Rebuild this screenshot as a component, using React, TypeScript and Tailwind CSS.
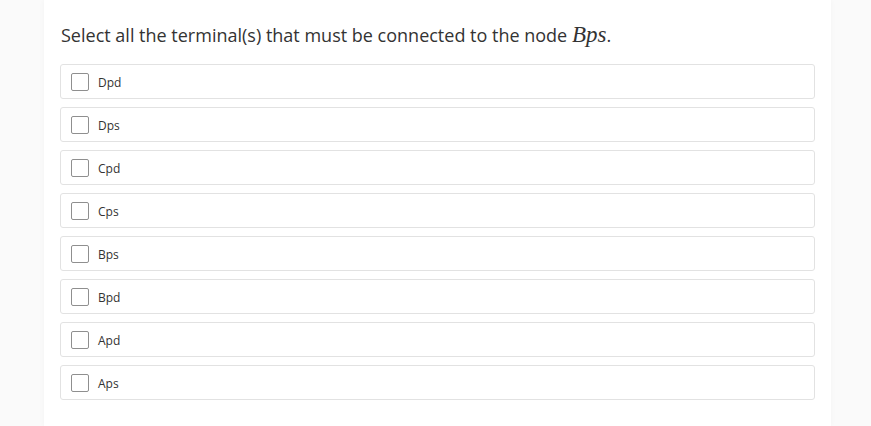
const options = ["Dpd", "Dps", "Cpd", "Cps", "Bps", "Bpd", "Apd", "Aps"];

export default function App() {
  return (
    <div className="min-h-screen w-full bg-[#fafafa]" style={{ fontFamily: '"Open Sans", "Noto Sans", sans-serif' }}>
      <div className="ml-[44px] w-[787px] min-h-[426px] bg-white px-4 pt-[21px] shadow-[0_0_6px_rgba(0,0,0,0.03)]">
        <h2 className="mb-[15px] pl-px text-[18px] leading-[28px] text-[#333333]">
          Select all the terminal(s) that must be connected to the node{" "}
          <span className="text-[23px] italic" style={{ fontFamily: '"Liberation Serif", "DejaVu Serif", serif' }}>
            Bps
          </span>
          .
        </h2>
        <div className="flex flex-col gap-[8px]">
          {options.map((opt) => (
            <label
              key={opt}
              className="flex h-[35px] w-[755px] items-center rounded-[3px] border border-[#e2e2e2] pl-[10px]"
            >
              <span className="h-[18px] w-[18px] rounded-[2px] border border-[#8f8f8f] bg-white" />
              <span className="ml-[9px] pt-[2px] text-[12px] text-[#333333]">{opt}</span>
            </label>
          ))}
        </div>
      </div>
    </div>
  );
}
